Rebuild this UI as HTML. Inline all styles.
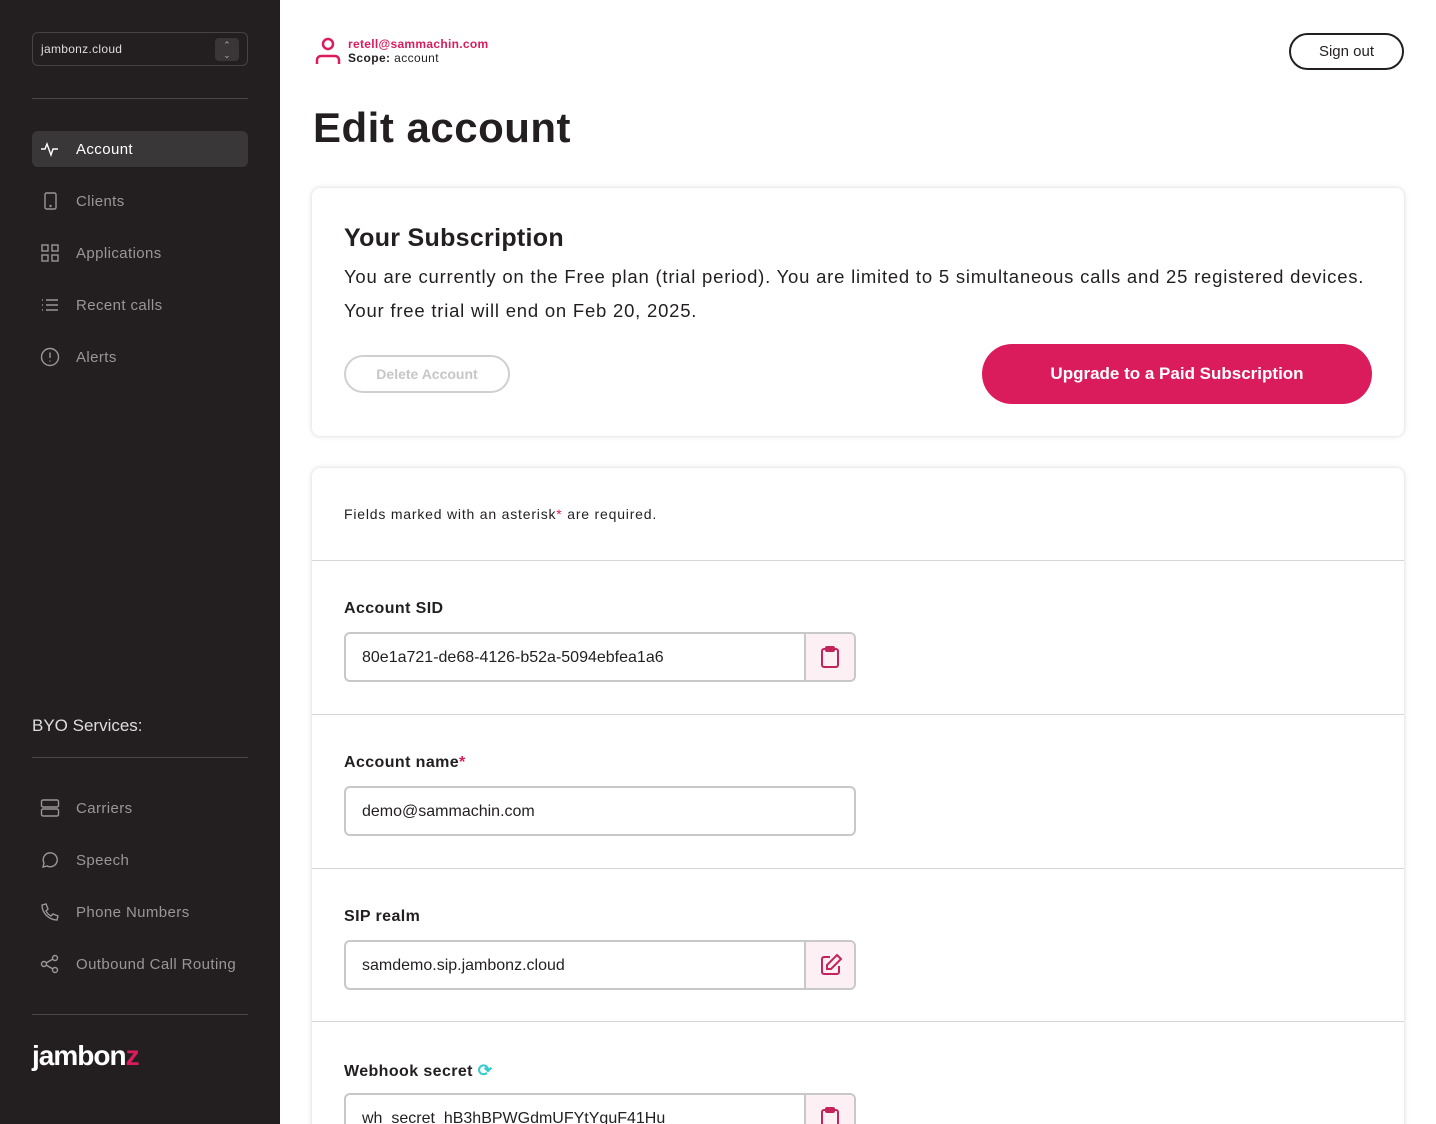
<!DOCTYPE html>
<html><head><meta charset="utf-8"><style>
*{box-sizing:border-box;margin:0;padding:0}
html,body{width:1436px;height:1124px;overflow:hidden}
body{font-family:"Liberation Sans",sans-serif;background:#fff;position:relative;color:#231f20}
.sb{position:absolute;left:0;top:0;width:280px;height:1124px;background:#231f20}
.sel{position:absolute;left:32px;top:32px;width:216px;height:34px;border:1px solid #444;border-radius:6px;color:#ddd;font-size:12px;padding:9px 8px;letter-spacing:.3px}
.sel .ar{position:absolute;right:8px;top:5px;width:24px;height:23px;background:#3a3637;border-radius:4px;color:#aaa;font-size:9px;text-align:center;line-height:10px;padding-top:2px}
.hr{position:absolute;left:32px;width:216px;height:1px;background:#4a4647}
.it{position:absolute;left:32px;width:216px;height:36px;border-radius:6px;color:#9a9697;font-size:15px;line-height:37px;padding-left:44px;letter-spacing:.4px}
.it.act{background:#3a3738;color:#fff}
.it svg{position:absolute;left:8px;top:8px}
.sec{position:absolute;left:32px;top:716px;color:#ddd;font-size:17px}
.card{position:absolute;left:312px;width:1092px;background:#fff;border-radius:8px;box-shadow:0 0 5px rgba(0,0,0,.18)}
.lbl{position:absolute;left:344px;font-size:16px;font-weight:bold;color:#231f20;letter-spacing:.4px}
.inp{position:absolute;left:344px;width:512px;height:50px;border:2px solid #c8c8c8;border-radius:6px;font-size:16px;padding:15px 16px 0;background:#fff}
.inp .b{position:absolute;right:0;top:0;width:50px;height:46px;border-left:2px solid #c8c8c8;background:#fdf0f4;border-radius:0 4px 4px 0}
.inp .b svg{position:absolute;left:13px;top:11px}
.dv{position:absolute;left:312px;width:1092px;height:1px;background:#d6d6d6}
</style></head><body>
<div class="sb">
 <div class="sel">jambonz.cloud<div class="ar">⌃<br>⌄</div></div>
 <div class="hr" style="top:98px"></div>
 <div class="it act" style="top:131px"><svg width="20" height="20" viewBox="0 0 20 20" fill="none" stroke="#fff" stroke-width="1.4"><path d="M1 10h4l2-5 4 11 2-6h5"/></svg>Account</div>
 <div class="it" style="top:183px"><svg width="20" height="20" viewBox="0 0 20 20" fill="none" stroke="#9a9697" stroke-width="1.4"><rect x="5" y="2" width="11" height="16" rx="1.5"/><circle cx="10.5" cy="15" r=".5"/></svg>Clients</div>
 <div class="it" style="top:235px"><svg width="20" height="20" viewBox="0 0 20 20" fill="none" stroke="#9a9697" stroke-width="1.4"><rect x="2" y="2" width="6" height="6"/><rect x="12" y="2" width="6" height="6"/><rect x="2" y="12" width="6" height="6"/><rect x="12" y="12" width="6" height="6"/></svg>Applications</div>
 <div class="it" style="top:287px"><svg width="20" height="20" viewBox="0 0 20 20" fill="none" stroke="#9a9697" stroke-width="1.4"><path d="M6 5h12M6 10h12M6 15h12M2 5h1M2 10h1M2 15h1"/></svg>Recent calls</div>
 <div class="it" style="top:339px"><svg width="20" height="20" viewBox="0 0 20 20" fill="none" stroke="#9a9697" stroke-width="1.4"><circle cx="10" cy="10" r="8.5"/><path d="M10 5.5v5.5M10 13.5v1"/></svg>Alerts</div>
 <div class="sec">BYO Services:</div>
 <div class="hr" style="top:757px"></div>
 <div class="it" style="top:790px"><svg width="20" height="20" viewBox="0 0 20 20" fill="none" stroke="#9a9697" stroke-width="1.4"><rect x="1.5" y="2" width="17" height="7" rx="1.5"/><rect x="1.5" y="11" width="17" height="7" rx="1.5"/></svg>Carriers</div>
 <div class="it" style="top:842px"><svg width="20" height="20" viewBox="0 0 20 20" fill="none" stroke="#9a9697" stroke-width="1.4"><path d="M3 17l1-4a7 7 0 1 1 3 3z"/></svg>Speech</div>
 <div class="it" style="top:894px"><svg width="20" height="20" viewBox="0 0 20 20" fill="none" stroke="#9a9697" stroke-width="1.4"><path d="M2 3l4-1 2 5-2 2a11 11 0 0 0 5 5l2-2 5 2-1 4C9 18 2 11 2 3z"/></svg>Phone Numbers</div>
 <div class="it" style="top:946px"><svg width="20" height="20" viewBox="0 0 20 20" fill="none" stroke="#9a9697" stroke-width="1.4"><circle cx="15" cy="4" r="2.5"/><circle cx="4" cy="10" r="2.5"/><circle cx="15" cy="16" r="2.5"/><path d="M6 9l7-4M6 11l7 4"/></svg>Outbound Call Routing</div>
 <div class="hr" style="top:1014px"></div>
 <div style="position:absolute;left:32px;top:1040px;color:#fff;font-size:28px;font-weight:bold;letter-spacing:-1px">jambon<span style="color:#da1c5c">z</span></div>
</div>

<svg style="position:absolute;left:315px;top:37px" width="27" height="28" viewBox="0 0 27 28" fill="none" stroke="#da1c5c" stroke-width="2.5"><circle cx="13" cy="7" r="5"/><path d="M2 27v-4a4 4 0 0 1 4-4h14a4 4 0 0 1 4 4v4"/></svg>
<div style="position:absolute;left:348px;top:37px;font-size:12px;font-weight:bold;color:#da1c5c;letter-spacing:.3px">retell@sammachin.com</div>
<div style="position:absolute;left:348px;top:51px;font-size:12px;letter-spacing:.4px"><b>Scope:</b> account</div>
<div style="position:absolute;left:1289px;top:33px;width:115px;height:37px;border:2px solid #231f20;border-radius:19px;font-size:15px;text-align:center;line-height:33px">Sign out</div>
<div style="position:absolute;left:313px;top:104px;font-size:42px;font-weight:bold;letter-spacing:.5px">Edit account</div>

<div class="card" style="top:188px;height:248px"></div>
<div style="position:absolute;left:344px;top:224px;font-size:25px;font-weight:bold;letter-spacing:.3px">Your Subscription</div>
<div style="position:absolute;left:344px;top:260px;font-size:18.5px;line-height:34px;color:#231f20;letter-spacing:.78px;white-space:nowrap">You are currently on the Free plan (trial period). You are limited to 5 simultaneous calls and 25 registered devices.<br>Your free trial will end on Feb 20, 2025.</div>
<div style="position:absolute;left:344px;top:355px;width:166px;height:38px;border:2px solid #d0d0d0;border-radius:19px;color:#c6c6c6;font-size:14px;text-align:center;line-height:34px;font-weight:bold">Delete Account</div>
<div style="position:absolute;left:982px;top:344px;width:390px;height:60px;background:#da1c5c;border-radius:30px;color:#fff;font-size:17px;font-weight:bold;text-align:center;line-height:60px">Upgrade to a Paid Subscription</div>

<div class="card" style="top:468px;height:680px"></div>
<div style="position:absolute;left:344px;top:506px;font-size:14px;letter-spacing:.8px">Fields marked with an asterisk<span style="color:#da1c5c">*</span> are required.</div>
<div class="dv" style="top:560px"></div>
<div class="lbl" style="top:600px">Account SID</div>
<div class="inp" style="top:632px">80e1a721-de68-4126-b52a-5094ebfea1a6<div class="b"><svg width="22" height="24" viewBox="0 0 22 24" fill="none" stroke="#c4245a" stroke-width="2"><rect x="3" y="4" width="16" height="18" rx="2"/><rect x="7" y="2" width="8" height="4" rx="1"/></svg></div></div>
<div class="dv" style="top:714px"></div>
<div class="lbl" style="top:754px">Account name<span style="color:#da1c5c">*</span></div>
<div class="inp" style="top:786px">demo@sammachin.com</div>
<div class="dv" style="top:868px"></div>
<div class="lbl" style="top:908px">SIP realm</div>
<div class="inp" style="top:940px">samdemo.sip.jambonz.cloud<div class="b"><svg width="24" height="24" viewBox="0 0 24 24" fill="none" stroke="#c4245a" stroke-width="2"><path d="M11 4H5a2 2 0 0 0-2 2v13a2 2 0 0 0 2 2h13a2 2 0 0 0 2-2v-6"/><path d="M18 2l4 4-10 10H8v-4z"/></svg></div></div>
<div class="dv" style="top:1021px"></div>
<div class="lbl" style="top:1061px">Webhook secret <span style="color:#3cc;font-size:17px">⟳</span></div>
<div class="inp" style="top:1093px">wh_secret_hB3hBPWGdmUFYtYguF41Hu<div class="b"><svg width="22" height="24" viewBox="0 0 22 24" fill="none" stroke="#c4245a" stroke-width="2"><rect x="3" y="4" width="16" height="18" rx="2"/><rect x="7" y="2" width="8" height="4" rx="1"/></svg></div></div>
</body></html>
